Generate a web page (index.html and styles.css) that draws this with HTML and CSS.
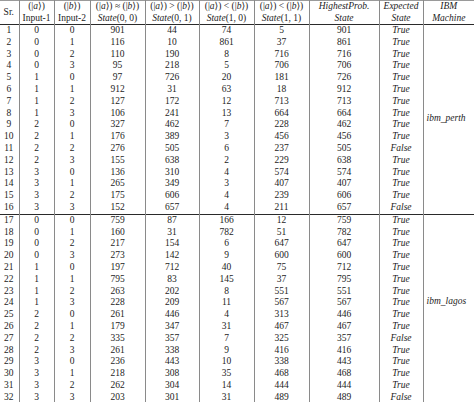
FILE: index.html
```html
<!DOCTYPE html>
<html>
<head>
<meta charset="utf-8">
<link rel="stylesheet" href="styles.css">
</head>
<body>
<table class="results">
<colgroup>
<col class="c-sr"><col class="c-in1"><col class="c-in2"><col class="c-s00"><col class="c-s01"><col class="c-s10"><col class="c-s11"><col class="c-hp"><col class="c-ex"><col class="c-ibm">
</colgroup>
<thead>
<tr>
<th class="sr">Sr.</th>
<th class="vl"><span class="ln">(|<i>a</i>⟩)</span><span class="ln">Input-1</span></th>
<th class="vl"><span class="ln">(|<i>b</i>⟩)</span><span class="ln">Input-2</span></th>
<th class="vl"><span class="ln">(|<i>a</i>⟩) ≈ (|<i>b</i>⟩)</span><span class="ln"><i>State</i>(0, 0)</span></th>
<th class="vl"><span class="ln">(|<i>a</i>⟩) &gt; (|<i>b</i>⟩)</span><span class="ln"><i>State</i>(0, 1)</span></th>
<th class="vl"><span class="ln">(|<i>a</i>⟩) &lt; (|<i>b</i>⟩)</span><span class="ln"><i>State</i>(1, 0)</span></th>
<th class="vl"><span class="ln">(|<i>a</i>⟩) &lt; (|<i>b</i>⟩)</span><span class="ln"><i>State</i>(1, 1)</span></th>
<th class="vl"><span class="ln"><i>HighestProb.</i></span><span class="ln"><i>State</i></span></th>
<th class="vl"><span class="ln"><i>Expected</i></span><span class="ln"><i>State</i></span></th>
<th class="vl"><span class="ln"><i>IBM</i></span><span class="ln"><i>Machine</i></span></th>
</tr>
</thead>
<tbody class="grp">
<tr><td>1</td><td class="vl">0</td><td class="vl">0</td><td class="vl">901</td><td class="vl">44</td><td class="vl">74</td><td class="vl">5</td><td class="vl">901</td><td class="vl"><i>True</i></td><td class="vl mach" rowspan="16"><i>ibm_perth</i></td></tr>
<tr><td>2</td><td class="vl">0</td><td class="vl">1</td><td class="vl">116</td><td class="vl">10</td><td class="vl">861</td><td class="vl">37</td><td class="vl">861</td><td class="vl"><i>True</i></td></tr>
<tr><td>3</td><td class="vl">0</td><td class="vl">2</td><td class="vl">110</td><td class="vl">190</td><td class="vl">8</td><td class="vl">716</td><td class="vl">716</td><td class="vl"><i>True</i></td></tr>
<tr><td>4</td><td class="vl">0</td><td class="vl">3</td><td class="vl">95</td><td class="vl">218</td><td class="vl">5</td><td class="vl">706</td><td class="vl">706</td><td class="vl"><i>True</i></td></tr>
<tr><td>5</td><td class="vl">1</td><td class="vl">0</td><td class="vl">97</td><td class="vl">726</td><td class="vl">20</td><td class="vl">181</td><td class="vl">726</td><td class="vl"><i>True</i></td></tr>
<tr><td>6</td><td class="vl">1</td><td class="vl">1</td><td class="vl">912</td><td class="vl">31</td><td class="vl">63</td><td class="vl">18</td><td class="vl">912</td><td class="vl"><i>True</i></td></tr>
<tr><td>7</td><td class="vl">1</td><td class="vl">2</td><td class="vl">127</td><td class="vl">172</td><td class="vl">12</td><td class="vl">713</td><td class="vl">713</td><td class="vl"><i>True</i></td></tr>
<tr><td>8</td><td class="vl">1</td><td class="vl">3</td><td class="vl">106</td><td class="vl">241</td><td class="vl">13</td><td class="vl">664</td><td class="vl">664</td><td class="vl"><i>True</i></td></tr>
<tr><td>9</td><td class="vl">2</td><td class="vl">0</td><td class="vl">327</td><td class="vl">462</td><td class="vl">7</td><td class="vl">228</td><td class="vl">462</td><td class="vl"><i>True</i></td></tr>
<tr><td>10</td><td class="vl">2</td><td class="vl">1</td><td class="vl">176</td><td class="vl">389</td><td class="vl">3</td><td class="vl">456</td><td class="vl">456</td><td class="vl"><i>True</i></td></tr>
<tr><td>11</td><td class="vl">2</td><td class="vl">2</td><td class="vl">276</td><td class="vl">505</td><td class="vl">6</td><td class="vl">237</td><td class="vl">505</td><td class="vl"><i>False</i></td></tr>
<tr><td>12</td><td class="vl">2</td><td class="vl">3</td><td class="vl">155</td><td class="vl">638</td><td class="vl">2</td><td class="vl">229</td><td class="vl">638</td><td class="vl"><i>True</i></td></tr>
<tr><td>13</td><td class="vl">3</td><td class="vl">0</td><td class="vl">136</td><td class="vl">310</td><td class="vl">4</td><td class="vl">574</td><td class="vl">574</td><td class="vl"><i>True</i></td></tr>
<tr><td>14</td><td class="vl">3</td><td class="vl">1</td><td class="vl">265</td><td class="vl">349</td><td class="vl">3</td><td class="vl">407</td><td class="vl">407</td><td class="vl"><i>True</i></td></tr>
<tr><td>15</td><td class="vl">3</td><td class="vl">2</td><td class="vl">175</td><td class="vl">606</td><td class="vl">4</td><td class="vl">239</td><td class="vl">606</td><td class="vl"><i>True</i></td></tr>
<tr><td>16</td><td class="vl">3</td><td class="vl">3</td><td class="vl">152</td><td class="vl">657</td><td class="vl">4</td><td class="vl">211</td><td class="vl">657</td><td class="vl"><i>False</i></td></tr>
</tbody>
<tbody class="grp">
<tr><td>17</td><td class="vl">0</td><td class="vl">0</td><td class="vl">759</td><td class="vl">87</td><td class="vl">166</td><td class="vl">12</td><td class="vl">759</td><td class="vl"><i>True</i></td><td class="vl mach lagos" rowspan="16"><i>ibm_lagos</i></td></tr>
<tr><td>18</td><td class="vl">0</td><td class="vl">1</td><td class="vl">160</td><td class="vl">31</td><td class="vl">782</td><td class="vl">51</td><td class="vl">782</td><td class="vl"><i>True</i></td></tr>
<tr><td>19</td><td class="vl">0</td><td class="vl">2</td><td class="vl">217</td><td class="vl">154</td><td class="vl">6</td><td class="vl">647</td><td class="vl">647</td><td class="vl"><i>True</i></td></tr>
<tr><td>20</td><td class="vl">0</td><td class="vl">3</td><td class="vl">273</td><td class="vl">142</td><td class="vl">9</td><td class="vl">600</td><td class="vl">600</td><td class="vl"><i>True</i></td></tr>
<tr><td>21</td><td class="vl">1</td><td class="vl">0</td><td class="vl">197</td><td class="vl">712</td><td class="vl">40</td><td class="vl">75</td><td class="vl">712</td><td class="vl"><i>True</i></td></tr>
<tr><td>22</td><td class="vl">1</td><td class="vl">1</td><td class="vl">795</td><td class="vl">83</td><td class="vl">145</td><td class="vl">37</td><td class="vl">795</td><td class="vl"><i>True</i></td></tr>
<tr><td>23</td><td class="vl">1</td><td class="vl">2</td><td class="vl">263</td><td class="vl">202</td><td class="vl">8</td><td class="vl">551</td><td class="vl">551</td><td class="vl"><i>True</i></td></tr>
<tr><td>24</td><td class="vl">1</td><td class="vl">3</td><td class="vl">228</td><td class="vl">209</td><td class="vl">11</td><td class="vl">567</td><td class="vl">567</td><td class="vl"><i>True</i></td></tr>
<tr><td>25</td><td class="vl">2</td><td class="vl">0</td><td class="vl">261</td><td class="vl">446</td><td class="vl">4</td><td class="vl">313</td><td class="vl">446</td><td class="vl"><i>True</i></td></tr>
<tr><td>26</td><td class="vl">2</td><td class="vl">1</td><td class="vl">179</td><td class="vl">347</td><td class="vl">31</td><td class="vl">467</td><td class="vl">467</td><td class="vl"><i>True</i></td></tr>
<tr><td>27</td><td class="vl">2</td><td class="vl">2</td><td class="vl">335</td><td class="vl">357</td><td class="vl">7</td><td class="vl">325</td><td class="vl">357</td><td class="vl"><i>False</i></td></tr>
<tr><td>28</td><td class="vl">2</td><td class="vl">3</td><td class="vl">261</td><td class="vl">338</td><td class="vl">9</td><td class="vl">416</td><td class="vl">416</td><td class="vl"><i>True</i></td></tr>
<tr><td>29</td><td class="vl">3</td><td class="vl">0</td><td class="vl">236</td><td class="vl">443</td><td class="vl">10</td><td class="vl">338</td><td class="vl">443</td><td class="vl"><i>True</i></td></tr>
<tr><td>30</td><td class="vl">3</td><td class="vl">1</td><td class="vl">218</td><td class="vl">308</td><td class="vl">35</td><td class="vl">468</td><td class="vl">468</td><td class="vl"><i>True</i></td></tr>
<tr><td>31</td><td class="vl">3</td><td class="vl">2</td><td class="vl">262</td><td class="vl">304</td><td class="vl">14</td><td class="vl">444</td><td class="vl">444</td><td class="vl"><i>True</i></td></tr>
<tr><td>32</td><td class="vl">3</td><td class="vl">3</td><td class="vl">203</td><td class="vl">301</td><td class="vl">31</td><td class="vl">489</td><td class="vl">489</td><td class="vl"><i>False</i></td></tr>
</tbody>
</table>
</body>
</html>
```

FILE: styles.css
```css
html, body {
  margin: 0;
  padding: 0;
  background: #ffffff;
  overflow: hidden;
}

.results {
  margin-left: -1px;
  border-collapse: collapse;
  table-layout: fixed;
  width: 475px;
  font-family: "Liberation Serif", "DejaVu Serif", serif;
  font-size: 9.5px;
  color: #1c1c1c;
  border-top: 1px solid #9a9a9a;
}

.c-sr { width: 20px; }
.c-in1 { width: 35px; }
.c-in2 { width: 36px; }
.c-s00 { width: 55px; }
.c-s01 { width: 54px; }
.c-s10 { width: 55px; }
.c-s11 { width: 55px; }
.c-hp { width: 70px; }
.c-ex { width: 44px; }
.c-ibm { width: 51px; }

.results th,
.results td {
  padding: 0;
  text-align: center;
  white-space: nowrap;
  font-weight: normal;
}

.results td {
  height: 11.8px;
  line-height: 11.8px;
}

.results th {
  height: 23px;
  line-height: 11.5px;
  vertical-align: middle;
}

.results .vl {
  border-left: 1px solid #8a8a8a;
}

.ln {
  display: block;
}

thead tr {
  border-bottom: 1px solid #2a2a2a;
}

.grp + .grp {
  border-top: 1px solid #2a2a2a;
}

.results td.mach {
  vertical-align: middle;
  text-align: left;
  padding-left: 3px;
}

.results td.lagos {
  padding-bottom: 14px;
}

i {
  font-style: italic;
}
```
